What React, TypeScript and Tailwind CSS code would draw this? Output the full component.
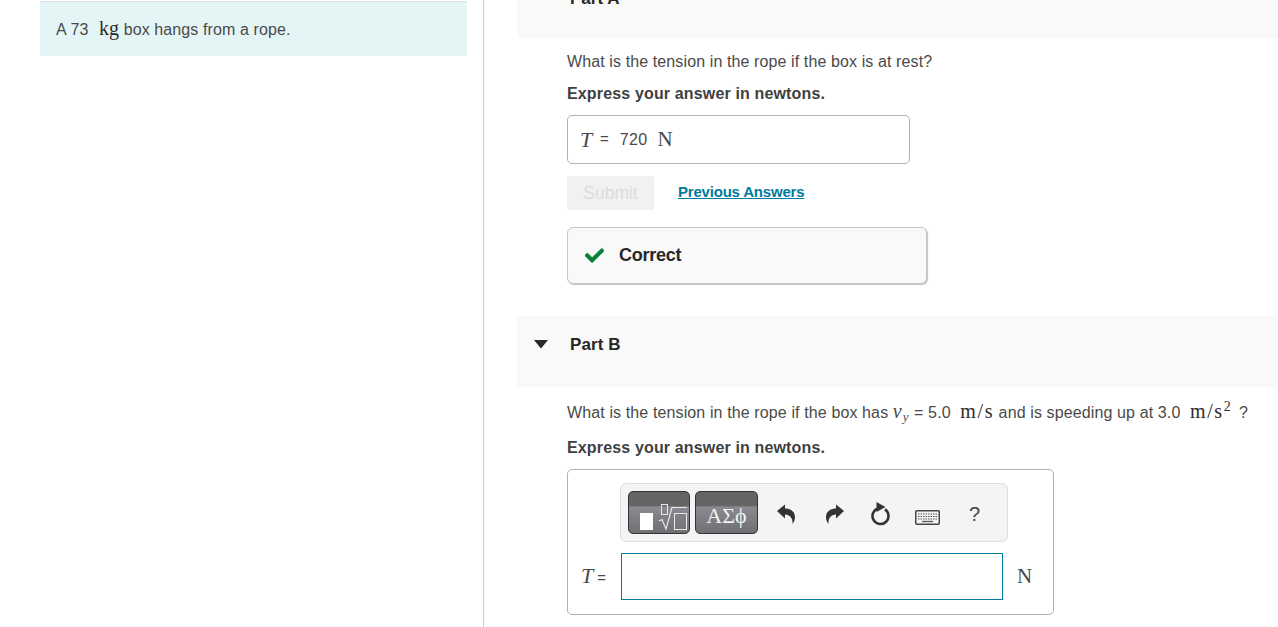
import React from "react";
import { FaCheck } from "react-icons/fa";

const mathFont = "font-['Liberation_Serif',serif]";

const Unit = ({ children, wide }: { children: React.ReactNode; wide?: boolean }) => (
  <span className={`${mathFont} text-[20px] text-[#2b2b2b] ${wide ? "ml-[3px] tracking-[1.6px]" : "ml-[6px]"}`}>
    {children}
  </span>
);

const TemplatesIcon = () => (
  <svg width="62" height="43" viewBox="0 0 62 43" fill="none" className="block">
    <rect x="11" y="21" width="13" height="17" fill="#fff" />
    <rect x="32.5" y="12.5" width="6" height="10" stroke="#e8e8e8" />
    <path d="M30 29 L33 27.5 L37 37 L43 15.5 H58" stroke="#e8e8e8" strokeWidth="1.2" />
    <rect x="45.5" y="21.5" width="12" height="16" stroke="#e8e8e8" />
  </svg>
);

const UndoIcon = () => (
  <svg width="18" height="20" viewBox="0 0 18 20">
    <path d="M0 7 L8 0.5 V4.5 C14 4.5 18 8 18 13 C18 16 17 18 15.5 20 C16 15 13.5 10.5 8 10.5 V14.5 Z" fill="#333" />
  </svg>
);

const RedoIcon = () => (
  <svg width="18" height="20" viewBox="0 0 18 20">
    <path d="M18 7 L10 0.5 V4.5 C4 4.5 0 8 0 13 C0 16 1 18 2.5 20 C2 15 4.5 10.5 10 10.5 V14.5 Z" fill="#333" />
  </svg>
);

const ResetIcon = () => (
  <svg width="22" height="24" viewBox="0 0 22 24" fill="none">
    <path d="M7.5 6.6 A8 8 0 1 0 15 7.4" stroke="#333" strokeWidth="2.6" />
    <path d="M6.5 0 L15.5 5 L6.5 10 Z" fill="#333" />
  </svg>
);

const KeyboardIcon = () => (
  <svg width="25" height="15" viewBox="0 0 25 15" fill="none">
    <rect x="0.75" y="0.75" width="23.5" height="13.5" rx="1" stroke="#444" strokeWidth="1.5" fill="#f4f4f4" />
    <path d="M3 4 H22 M3 6.5 H22 M3 9 H22" stroke="#555" strokeWidth="1.2" strokeDasharray="1.5 1" />
    <path d="M7 11.5 H18" stroke="#555" strokeWidth="1.3" />
  </svg>
);

const ToolButton = ({ width, children }: { width: string; children: React.ReactNode }) => (
  <div
    className={`${width} h-[43px] overflow-hidden rounded-[5px] border border-[#333] bg-[linear-gradient(#636363_0%,#666_34%,#8a8a90_36%,#6f6f74_100%)]`}
  >
    {children}
  </div>
);

export default function App() {
  return (
    <div className="flex h-[627px] w-[1278px] overflow-hidden bg-white font-['Liberation_Sans',sans-serif] text-[16px] text-[#4a4a4a]">
      <aside className="h-full w-[484px] shrink-0 border-r border-[#c8ced6] pl-10 pr-4 pt-px">
        <div className="h-[55px] border-t border-[#dde5e8] bg-[#e4f5f6] pl-4 pt-[14px] leading-6 tracking-[0.1px]">
          A 73 <Unit>kg</Unit> box hangs from a rope.
        </div>
      </aside>

      <main className="ml-[33px] flex-1">
        <div className="h-[38px] overflow-hidden bg-[#f9f9f9] pl-[53px]">
          <p className="-mt-[11px] text-[17px] font-bold leading-[20px] text-[#272727]">Part A</p>
        </div>

        <div className="pl-[50px]">
          <p className="mt-[14px] leading-5 tracking-[0.11px]">What is the tension in the rope if the box is at rest?</p>
          <p className="mt-3 font-bold leading-5 tracking-[0.15px] text-[#3f3f3f]">Express your answer in newtons.</p>

          <div className="mt-[11px] flex h-[49px] w-[343px] items-center rounded-[5px] border border-[#b0b0b0] pl-[12px]">
            <span className={`${mathFont} w-[20px] text-[22px] italic tracking-[2px] text-[#4a4a4a]`}>T</span>
            <span className="text-[15px]">=</span>
            <span className="ml-[11px] tracking-[0.3px]">720</span>
            <span className={`${mathFont} ml-[10px] text-[21px] text-[#4a4a4a]`}>N</span>
          </div>

          <div className="mt-3 flex items-center">
            <button className="h-[34px] w-[87px] rounded-[2px] bg-[#f1f1f1] text-center text-[17.5px] text-[#dcdcdc]">
              Submit
            </button>
            <a className="ml-[24px] -mt-[1px] text-[15px] font-bold tracking-[-0.2px] text-[#007b9e] underline">
              Previous Answers
            </a>
          </div>

          <div className="mt-[17px] flex h-[57px] w-[360px] items-center rounded-[6px] border border-[#c6c6c6] bg-[#f9f9f9] pl-[17px] shadow-[1px_1px_1px_#c4c4c4]">
            <FaCheck className="text-[#058138]" size={19} stroke="currentColor" strokeWidth={12} />
            <span className="-mt-[2px] ml-[15px] text-[18px] font-bold leading-5 tracking-[-0.25px] text-[#272727]">
              Correct
            </span>
          </div>
        </div>

        <div className="mt-8 flex h-[71px] items-start bg-[#f9f9f9] pl-[17px] pt-[19px]">
          <svg width="14" height="9" viewBox="0 0 14 9" className="mt-[5px]">
            <path d="M0 0 H14 L7 8.5 Z" fill="#272727" />
          </svg>
          <span className="ml-[22px] text-[17px] font-bold leading-5 tracking-[0.1px] text-[#272727]">Part B</span>
        </div>

        <div className="pl-[50px]">
          <p className="mt-[12px] h-6 whitespace-pre leading-6 tracking-[0.12px]">
            What is the tension in the rope if the box has{" "}
            <span className={`${mathFont} text-[20px] italic tracking-[1px]`}>
              v<sub className="text-[13px]">y</sub>
            </span>
            {" "}= 5.0<Unit wide>{" "}m/s</Unit> and is speeding up at 3.0<Unit wide>
              {" "}m/s<sup className="text-[14px]">2</sup>
            </Unit> <span className="ml-[2px]">?</span>
          </p>
          <p className="mt-[15px] font-bold leading-5 tracking-[0.15px] text-[#3f3f3f]">Express your answer in newtons.</p>

          <div className="mt-[11px] h-[146px] w-[487px] rounded-[5px] border border-[#b0b0b0] pl-[52px] pt-[13px]">
            <div className="flex h-[59px] w-[388px] items-center rounded-[6px] border border-[#dedede] bg-[#f4f4f4] pl-[7px]">
              <ToolButton width="w-[62px]">
                <TemplatesIcon />
              </ToolButton>
              <div className="ml-[5px]">
                <ToolButton width="w-[63px]">
                  <div className={`${mathFont} mt-[12px] text-center text-[22px] leading-6 text-[#f2f2f2]`}>ΑΣϕ</div>
                </ToolButton>
              </div>
              <div className="ml-[19px] mt-[3px]">
                <UndoIcon />
              </div>
              <div className="ml-[31px] mt-[3px]">
                <RedoIcon />
              </div>
              <div className="ml-[26px] mt-[3px]">
                <ResetIcon />
              </div>
              <div className="ml-[23px] mt-[10px]">
                <KeyboardIcon />
              </div>
              <span className="ml-[29px] mt-[3px] text-[20px] text-[#444]">?</span>
            </div>

            <div className="relative mt-[11px] flex h-[47px] items-center">
              <input className="ml-px h-[47px] w-[382px] rounded-none border border-[#007b9e] bg-white" />
              <span className={`${mathFont} absolute -left-[39px] -mt-[2px] text-[22px] italic tracking-[2px] text-[#4a4a4a]`}>
                T<span className="ml-[2px] font-['Liberation_Sans',sans-serif] text-[15px] not-italic">=</span>
              </span>
              <span className={`${mathFont} ml-[14px] text-[21px] text-[#4a4a4a]`}>N</span>
            </div>
          </div>
        </div>
      </main>
    </div>
  );
}
